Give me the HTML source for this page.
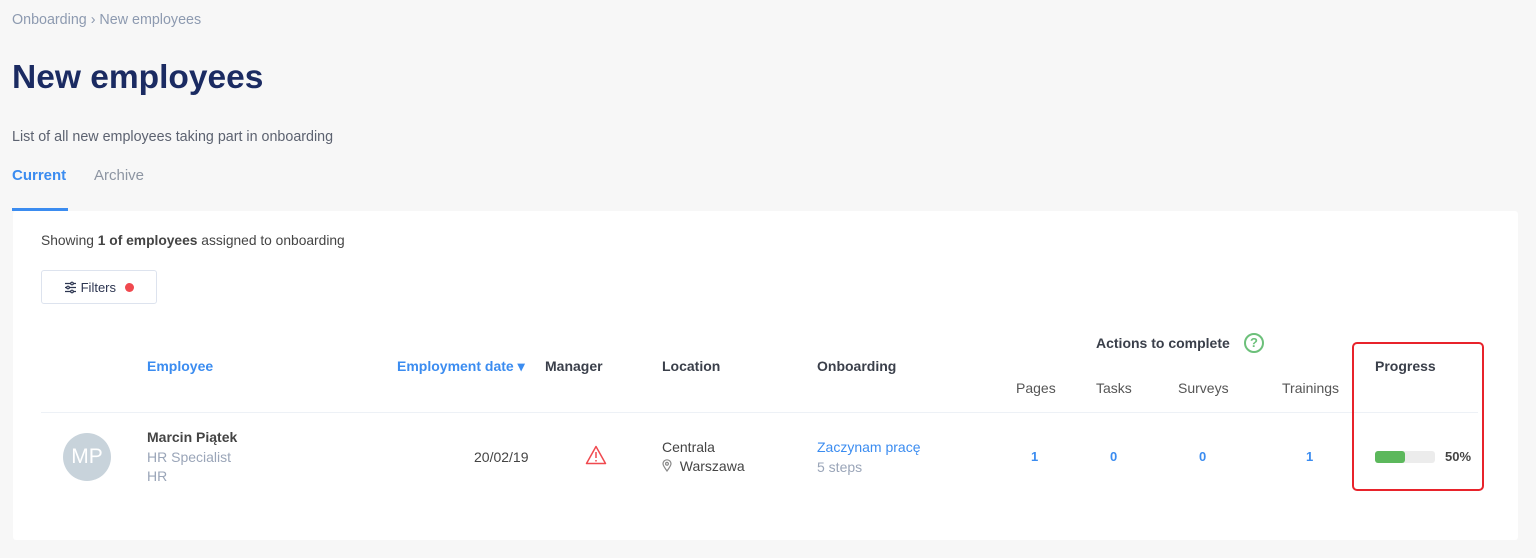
<!DOCTYPE html>
<html><head><meta charset="utf-8"><style>
*{margin:0;padding:0;box-sizing:border-box}
body{width:1536px;height:558px;background:#f7f7f7;font-family:"Liberation Sans",sans-serif;position:relative;overflow:hidden;color:#3a3f4a}
.a{position:absolute;white-space:nowrap}
.card{position:absolute;left:13px;top:211px;width:1505px;height:329px;background:#fff;border-radius:3px}
.h{font-weight:bold;font-size:14px;color:#3a3f4a}
.blue{color:#3b8cf0}
.n{font-size:13px;color:#3b8cf0;font-weight:bold}
.sub{color:#9aa5b8;font-size:14px}
</style></head><body>
<div class="a" style="left:12px;top:12px;font-size:14.3px;color:#8d9ab0">Onboarding › New employees</div>
<div class="a" style="left:12px;top:59px;font-size:33.5px;font-weight:bold;color:#1b2b62">New employees</div>
<div class="a" style="left:12px;top:129px;font-size:14.3px;color:#5c6270">List of all new employees taking part in onboarding</div>
<div class="a" style="left:12px;top:167px;font-size:15px;font-weight:bold;color:#3b8cf0">Current</div>
<div class="a" style="left:94px;top:167px;font-size:15px;color:#8d95a2">Archive</div>
<div class="a" style="left:12px;top:208px;width:56px;height:3px;background:#3b8cf0"></div>
<div class="card"></div>
<div class="a" style="left:41px;top:233px;font-size:13.8px;color:#444">Showing <b>1 of employees</b> assigned to onboarding</div>
<div class="a" style="left:41px;top:270px;width:116px;height:34px;border:1px solid #dde3ee;border-radius:3px"></div>
<div class="a" style="left:64px;top:280px;font-size:13px;color:#2c3550">
<svg width="13" height="13" viewBox="0 0 13 13" style="vertical-align:-2px" fill="none" stroke="#2c3550" stroke-width="1.2"><path d="M1 2.5h11M1 6.5h11M1 10.5h11"/><circle cx="8" cy="2.5" r="1.3" fill="#fff"/><circle cx="4" cy="6.5" r="1.3" fill="#fff"/><circle cx="8" cy="10.5" r="1.3" fill="#fff"/></svg> Filters</div>
<div class="a" style="left:125px;top:283px;width:9px;height:9px;border-radius:50%;background:#f0494f"></div>
<div class="a h blue" style="left:147px;top:358px;color:#3b8cf0">Employee</div>
<div class="a h" style="left:397px;top:358px;color:#3b8cf0">Employment date ▾</div>
<div class="a h" style="left:545px;top:358px">Manager</div>
<div class="a h" style="left:662px;top:358px">Location</div>
<div class="a h" style="left:817px;top:358px">Onboarding</div>
<div class="a h" style="left:1096px;top:335px">Actions to complete</div>
<div class="a" style="left:1244px;top:333px;width:20px;height:20px;border:2px solid #6cc07a;border-radius:50%;color:#6cc07a;font-size:13px;font-weight:bold;text-align:center;line-height:16px">?</div>
<div class="a" style="left:1016px;top:380px;font-size:14px;color:#555">Pages</div>
<div class="a" style="left:1096px;top:380px;font-size:14px;color:#555">Tasks</div>
<div class="a" style="left:1178px;top:380px;font-size:14px;color:#555">Surveys</div>
<div class="a" style="left:1282px;top:380px;font-size:14px;color:#555">Trainings</div>
<div class="a h" style="left:1375px;top:358px">Progress</div>
<div class="a" style="left:41px;top:412px;width:1437px;height:1px;background:#edf1f6"></div>
<div class="a" style="left:63px;top:433px;width:48px;height:48px;border-radius:50%;background:#c8d3db;color:#fff;font-size:21px;text-align:center;line-height:48px">MP</div>
<div class="a" style="left:147px;top:429px;font-size:14px;font-weight:bold;color:#444">Marcin Piątek</div>
<div class="a sub" style="left:147px;top:449px">HR Specialist</div>
<div class="a sub" style="left:147px;top:468px">HR</div>
<div class="a" style="left:474px;top:449px;font-size:14px;color:#444">20/02/19</div>
<svg class="a" style="left:585px;top:445px" width="22" height="20" viewBox="0 0 22 20" fill="none" stroke="#f0494f" stroke-width="1.5"><path d="M11 1.5L20.5 18.5H1.5Z" stroke-linejoin="round"/><path d="M11 7v6M11 15v1.5"/></svg>
<div class="a" style="left:662px;top:439px;font-size:14px;color:#444">Centrala</div>
<div class="a" style="left:662px;top:458px;font-size:14px;color:#444"><svg width="10" height="13" viewBox="0 0 10 13" fill="none" stroke="#888" stroke-width="1.2" style="vertical-align:-1px"><path d="M5 12C2 8 1 6.5 1 4.8a4 4 0 018 0C9 6.5 8 8 5 12z"/><circle cx="5" cy="4.8" r="1.4"/></svg>&nbsp; Warszawa</div>
<div class="a" style="left:817px;top:439px;font-size:14px;color:#3b8cf0">Zaczynam pracę</div>
<div class="a sub" style="left:817px;top:459px">5 steps</div>
<div class="a n" style="left:1031px;top:449px">1</div>
<div class="a n" style="left:1110px;top:449px">0</div>
<div class="a n" style="left:1199px;top:449px">0</div>
<div class="a n" style="left:1306px;top:449px">1</div>
<div class="a" style="left:1375px;top:451px;width:60px;height:12px;background:#ececec;border-radius:3px"></div>
<div class="a" style="left:1375px;top:451px;width:30px;height:12px;background:#5cb85c;border-radius:3px"></div>
<div class="a" style="left:1445px;top:449px;font-size:13px;font-weight:bold;color:#444">50%</div>
<div class="a" style="left:1352px;top:342px;width:132px;height:149px;border:2px solid #e8232b;border-radius:5px"></div>
</body></html>
